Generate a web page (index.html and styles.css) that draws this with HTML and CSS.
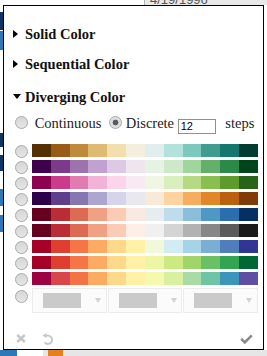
FILE: index.html
```html
<!DOCTYPE html>
<html lang="en">

<head>
    <meta charset="UTF-8">
    <title>Color picker</title>
    <link rel="stylesheet" href="styles.css">
</head>

<body>
    <div class="backdrop">
        <div class="top-strip">
            <div class="blank"></div>
            <div class="date-cell"><span>4/19/1996</span></div>
        </div>
        <div class="middle">
            <div class="side">
                <div class="blk navy b1"></div>
                <div class="blk light b2"></div>
                <div class="blk navy b3"></div>
                <div class="blk navy b4"></div>
                <div class="blk light b5"></div>
                <div class="blk light b6"></div>
            </div>
        </div>
        <div class="bottom-strip">
            <div class="c-blue"></div>
            <div class="c-white"></div>
            <div class="c-gray"></div>
            <div class="c-orange"></div>
            <div class="c-rest"></div>
        </div>
    </div>

    <div class="picker">
        <div class="group"><span class="tri tri-right"></span>Solid Color</div>
        <div class="group"><span class="tri tri-right"></span>Sequential Color</div>
        <div class="group open"><span class="tri tri-down"></span>Diverging Color</div>

        <div class="mode-row">
            <label><input type="radio" name="mode"> Continuous</label>
            <label class="discrete"><input type="radio" name="mode" checked> Discrete</label>
            <input type="text" class="steps" value="12">
            <span class="steps-label">steps</span>
        </div>

        <div class="palettes">
            <div class="palette">
                <input type="radio" name="pal">
                <div class="ramp">
                    <span style="background:#553005"></span><span style="background:#985b18"></span><span style="background:#c08a3c"></span><span style="background:#dfba73"></span><span style="background:#f1dfae"></span><span style="background:#f4eedf"></span><span style="background:#e0efed"></span><span style="background:#b3e2dd"></span><span style="background:#7dc8bd"></span><span style="background:#3f9c8f"></span><span style="background:#14766c"></span><span style="background:#023c30"></span>
                </div>
            </div>
            <div class="palette">
                <input type="radio" name="pal">
                <div class="ramp">
                    <span style="background:#40004b"></span><span style="background:#7b3a8a"></span><span style="background:#9d72ad"></span><span style="background:#c0a1cf"></span><span style="background:#ddc9e3"></span><span style="background:#efe5ef"></span><span style="background:#e6f3e4"></span><span style="background:#cde9c8"></span><span style="background:#9fd69b"></span><span style="background:#62b06a"></span><span style="background:#2b8a47"></span><span style="background:#00441b"></span>
                </div>
            </div>
            <div class="palette">
                <input type="radio" name="pal">
                <div class="ramp">
                    <span style="background:#8e0152"></span><span style="background:#cc3a8b"></span><span style="background:#e07cb2"></span><span style="background:#f1b3d8"></span><span style="background:#fbd6ea"></span><span style="background:#f8eaf2"></span><span style="background:#eff6e4"></span><span style="background:#d9efbd"></span><span style="background:#b5da82"></span><span style="background:#89bf4e"></span><span style="background:#5c9b2c"></span><span style="background:#276419"></span>
                </div>
            </div>
            <div class="palette">
                <input type="radio" name="pal">
                <div class="ramp">
                    <span style="background:#2d004b"></span><span style="background:#5d3f8c"></span><span style="background:#8677b0"></span><span style="background:#ada6cf"></span><span style="background:#d6d4e8"></span><span style="background:#eae8ef"></span><span style="background:#f8e9d8"></span><span style="background:#fdd49e"></span><span style="background:#f6ad5e"></span><span style="background:#e0862b"></span><span style="background:#bb600f"></span><span style="background:#7f3b08"></span>
                </div>
            </div>
            <div class="palette">
                <input type="radio" name="pal">
                <div class="ramp">
                    <span style="background:#67001f"></span><span style="background:#b92d34"></span><span style="background:#dc6a55"></span><span style="background:#f0a083"></span><span style="background:#fbccb4"></span><span style="background:#f8e9e2"></span><span style="background:#e5edf1"></span><span style="background:#bedcec"></span><span style="background:#8bbedb"></span><span style="background:#4f98c6"></span><span style="background:#2c6ead"></span><span style="background:#053061"></span>
                </div>
            </div>
            <div class="palette">
                <input type="radio" name="pal">
                <div class="ramp">
                    <span style="background:#67001f"></span><span style="background:#b92d34"></span><span style="background:#dc6a55"></span><span style="background:#f0a083"></span><span style="background:#fbccb4"></span><span style="background:#fdefe7"></span><span style="background:#f0f0f0"></span><span style="background:#d4d4d4"></span><span style="background:#b2b2b2"></span><span style="background:#878787"></span><span style="background:#5a5a5a"></span><span style="background:#1a1a1a"></span>
                </div>
            </div>
            <div class="palette">
                <input type="radio" name="pal">
                <div class="ramp">
                    <span style="background:#a50026"></span><span style="background:#de3f2e"></span><span style="background:#f57547"></span><span style="background:#fcab63"></span><span style="background:#fed88b"></span><span style="background:#fff1a8"></span><span style="background:#f0f9d9"></span><span style="background:#d2ecf3"></span><span style="background:#a6d4e6"></span><span style="background:#7aaed3"></span><span style="background:#4f7ebb"></span><span style="background:#313695"></span>
                </div>
            </div>
            <div class="palette">
                <input type="radio" name="pal">
                <div class="ramp">
                    <span style="background:#a50026"></span><span style="background:#de3f2e"></span><span style="background:#f57547"></span><span style="background:#fcab63"></span><span style="background:#fed88b"></span><span style="background:#fff1a8"></span><span style="background:#edf6a4"></span><span style="background:#cde982"></span><span style="background:#a0d56b"></span><span style="background:#6ac064"></span><span style="background:#32a453"></span><span style="background:#006837"></span>
                </div>
            </div>
            <div class="palette">
                <input type="radio" name="pal">
                <div class="ramp">
                    <span style="background:#9e0142"></span><span style="background:#d8464b"></span><span style="background:#f47346"></span><span style="background:#fcab63"></span><span style="background:#fed88b"></span><span style="background:#fff1a8"></span><span style="background:#f3f9ad"></span><span style="background:#d8f09f"></span><span style="background:#a8dca4"></span><span style="background:#6fc4a6"></span><span style="background:#3e95ba"></span><span style="background:#5e4fa2"></span>
                </div>
            </div>
            <div class="palette custom">
                <input type="radio" name="pal">
                <div class="selects">
                    <div class="select"><span class="swatch"></span><span class="caret"></span></div>
                    <div class="select"><span class="swatch"></span><span class="caret"></span></div>
                    <div class="select"><span class="swatch"></span><span class="caret"></span></div>
                </div>
            </div>
        </div>

        <div class="actions">
            <svg class="ico-close" width="10" height="9" viewBox="0 0 10 9">
                <path d="M1.2 1 L8.8 8 M8.8 1 L1.2 8" stroke="#c6c6c6" stroke-width="2.4" fill="none"/>
            </svg>
            <svg class="ico-undo" width="12" height="12" viewBox="0 0 12 12">
                <path d="M3.5 2.6 H6.2 A4.2 4.2 0 1 1 2.6 9.4" stroke="#c6c6c6" stroke-width="1.8" fill="none"/>
                <path d="M0.6 2.6 L4.4 0 L4.4 5.2 Z" fill="#c6c6c6"/>
            </svg>
            <svg class="ico-ok" width="13" height="10" viewBox="0 0 13 10">
                <path d="M1.2 4.8 L4.8 8.4 L11.8 1.4" stroke="#8a8a8a" stroke-width="2.6" fill="none"/>
            </svg>
        </div>
    </div>
</body>

</html>
```

FILE: styles.css
```css
* {
    box-sizing: border-box;
}

body {
    margin: 0;
    width: 267px;
    height: 356px;
    overflow: hidden;
    position: relative;
    background: #fff;
    font-family: "Liberation Serif", "Times New Roman", serif;
}

/* page behind the popup */
.backdrop {
    height: 356px;
    display: flex;
    flex-direction: column;
}

.top-strip {
    height: 5px;
    display: flex;
}

.top-strip .blank {
    width: 144px;
}

.date-cell {
    flex: 1;
    border-left: 1px solid #b5b5b5;
    background: #e8e8e8;
    overflow: hidden;
    padding-left: 5px;
    font: 13px/15px "Liberation Sans", Arial, sans-serif;
    color: #555;
}

.date-cell span {
    display: block;
    margin-top: -8px;
}

.middle {
    flex: 1;
    display: flex;
}

.side {
    width: 3px;
    display: flex;
    flex-direction: column;
}

.blk.navy {
    background: #0e3566;
}

.blk.light {
    background: #2f78b8;
}

.b1 { margin-top: 7px; height: 18px; }
.b2 { margin-top: 1px; height: 19px; }
.b3 { margin-top: 83px; height: 14px; }
.b4 { margin-top: 8px; height: 16px; }
.b5 { margin-top: 18px; height: 17px; }
.b6 { margin-top: 9px; height: 17px; }

.bottom-strip {
    height: 6px;
    display: flex;
}

.c-blue { width: 17px; background: #2f78b8; }
.c-white { width: 26px; }
.c-gray { width: 5px; background: #e6e6e6; }
.c-orange { width: 15px; background: #e4801e; }
.c-rest { flex: 1; background: #e6e6e6; }

/* popup */
.picker {
    position: absolute;
    left: 3px;
    top: 5px;
    width: 261px;
    height: 345px;
    border: 1px solid #000;
    background: #fff;
    padding-top: 13px;
    display: flex;
    flex-direction: column;
    color: #111;
}

.group {
    height: 30px;
    line-height: 30px;
    padding-left: 9px;
    font-size: 14.5px;
    font-weight: bold;
    white-space: nowrap;
}

.group.open {
    margin-top: 3px;
}

.tri {
    display: inline-block;
    width: 0;
    height: 0;
}

.tri-right {
    border-left: 5px solid #000;
    border-top: 4px solid transparent;
    border-bottom: 4px solid transparent;
    margin-right: 7px;
    vertical-align: 1px;
}

.tri-down {
    border-top: 5px solid #000;
    border-left: 4px solid transparent;
    border-right: 4px solid transparent;
    margin-right: 4px;
    vertical-align: 3px;
}

.mode-row {
    height: 22px;
    padding: 1px 0 0 11px;
    line-height: 20px;
    font-size: 14.5px;
    color: #222;
    white-space: nowrap;
}

input[type="radio"] {
    -webkit-appearance: none;
    appearance: none;
    width: 13px;
    height: 13px;
    margin: 0;
    border: 1px solid #a8a8a8;
    border-radius: 50%;
    background: linear-gradient(#d6d6d6, #e6e6e6);
    flex: none;
}

input[type="radio"]:checked {
    background: radial-gradient(circle, #5a5a5a 0, #5a5a5a 2.5px, #dadada 3.2px, #e6e6e6 100%);
}

.mode-row input[type="radio"] {
    vertical-align: -1px;
    margin-right: 3px;
}

.mode-row .discrete input[type="radio"] {
    margin-left: 4px;
    margin-right: 0;
}

.steps {
    width: 38px;
    height: 15px;
    margin-left: 0;
    padding: 0 2px;
    border: 1px solid #8f8f8f;
    font: 11px "Liberation Sans", Arial, sans-serif;
    color: #000;
    vertical-align: -2px;
}

.steps-label {
    margin-left: 6px;
}

.palettes {
    margin-top: 10px;
    padding-left: 11px;
}

.palette {
    display: flex;
    align-items: center;
    height: 13px;
    margin-bottom: 3px;
}

.palette input[type="radio"] {
    margin-right: 4px;
    margin-top: 2px;
}

.ramp {
    width: 226px;
    height: 13px;
    display: flex;
}

.ramp span {
    flex: 1;
}

.palette.custom {
    height: 25px;
    align-items: flex-start;
}

.selects {
    width: 226px;
    display: grid;
    grid-template-columns: repeat(3, 1fr);
    column-gap: 1px;
}

.select {
    height: 25px;
    border: 1px solid #ececec;
    background: #fbfbfb;
    display: flex;
    align-items: center;
    padding-left: 10px;
}

.swatch {
    width: 38px;
    height: 15px;
    background: #cacaca;
}

.caret {
    width: 0;
    height: 0;
    margin-left: 14px;
    border-top: 5px solid #d2d2d2;
    border-left: 3px solid transparent;
    border-right: 3px solid transparent;
}

.actions {
    margin-top: auto;
    height: 21px;
    display: flex;
    align-items: center;
    padding: 0 10px 0 12px;
}

.ico-undo {
    margin-left: 16px;
}

.ico-ok {
    margin-left: auto;
}
```
